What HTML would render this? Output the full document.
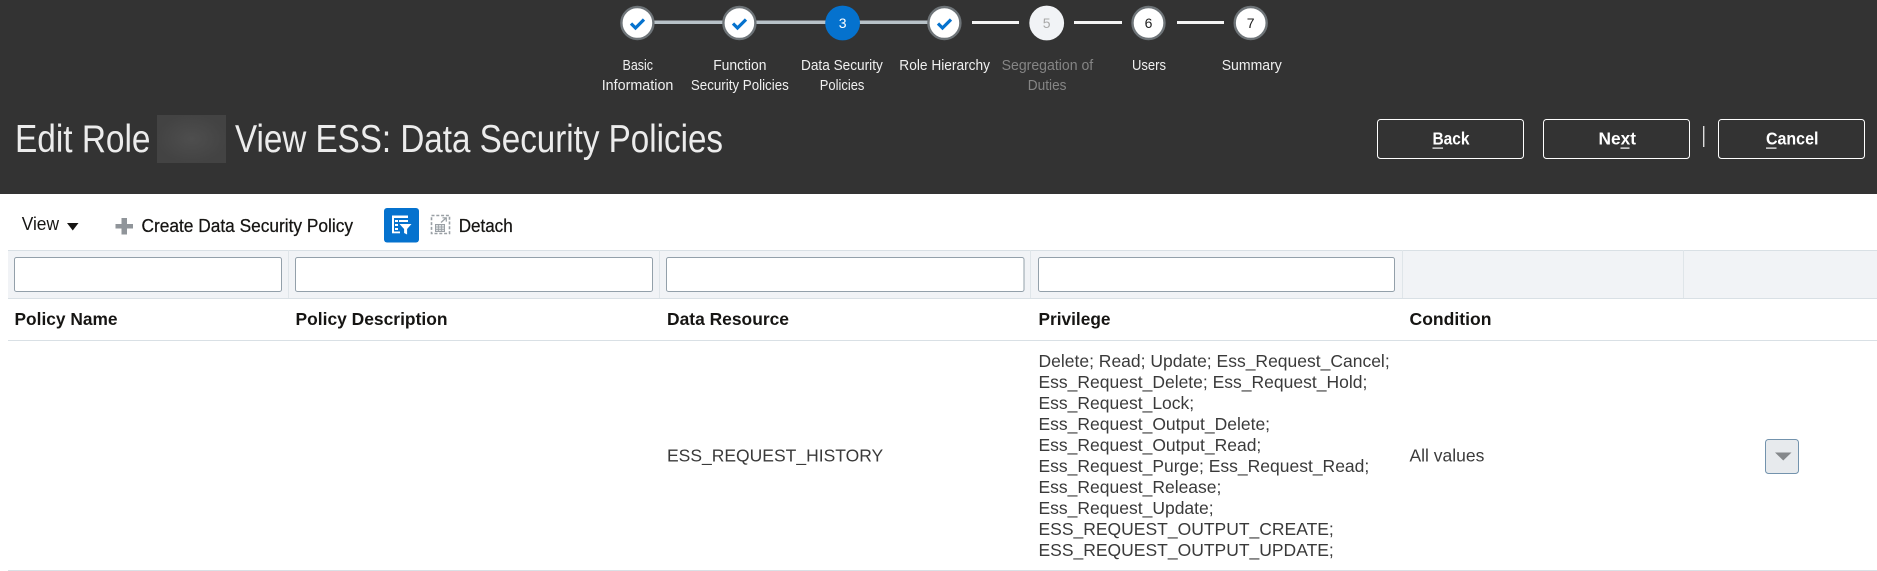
<!DOCTYPE html>
<html><head><meta charset="utf-8"><style>
html,body{margin:0;padding:0;background:#fff;width:1877px;height:571px;overflow:hidden}
svg{display:block}
text{font-family:"Liberation Sans",sans-serif}
.l{font-size:15px;fill:#f0f0f0}
.d{font-size:15px;fill:#858585}
.b{font-size:17.5px;font-weight:bold;fill:#fff}
.h{font-size:17.33px;font-weight:bold;fill:#161513}
.t{font-size:17.5px;fill:#3a3a3a}
.m{font-size:18px;fill:#161513;stroke:#161513;stroke-width:.25}
.n{font-size:14px;text-anchor:middle}
</style></head><body>
<svg width="1877" height="571" viewBox="0 0 1877 571" xmlns="http://www.w3.org/2000/svg">
<defs><radialGradient id="bl"><stop offset="0" stop-color="#4e4e4e"/><stop offset="1" stop-color="#434343"/></radialGradient></defs>
<rect x="0" y="0" width="1877" height="194" fill="#333"/>
<rect x="637" y="20.5" width="308" height="3.5" fill="#b8c2c8"/>
<rect x="972" y="21" width="47" height="3" fill="#f4f4f4"/>
<rect x="1074" y="21" width="48" height="3" fill="#f4f4f4"/>
<rect x="1177" y="21" width="47" height="3" fill="#f4f4f4"/>
<g fill="#fff" stroke="#6e7478" stroke-width="2.4">
<circle cx="637.4" cy="23" r="16"/><circle cx="739.4" cy="23" r="16"/><circle cx="944.4" cy="23" r="16"/><circle cx="1148.5" cy="23" r="16"/><circle cx="1250.7" cy="23" r="16"/>
</g>
<circle cx="842.6" cy="23" r="17.4" fill="#0572ce"/>
<circle cx="1046.7" cy="23" r="17.4" fill="#f1f3f6"/>
<g fill="none" stroke="#0572ce" stroke-width="3.2">
<path d="M631 23.5l4.500 4.500 8.500-8.500"/><path d="M733 23.5l4.500 4.500 8.500-8.500"/><path d="M938 23.5l4.500 4.500 8.500-8.500"/>
</g>
<text class="n" x="842.6" y="28" fill="#fff">3</text>
<text class="n" x="1046.7" y="28" fill="#a8a8a8">5</text>
<text class="n" x="1148.5" y="28" fill="#222">6</text>
<text class="n" x="1250.7" y="28" fill="#222">7</text>

<text class="l" x="622.5" y="70" textLength="30.5" lengthAdjust="spacingAndGlyphs">Basic</text>
<text class="l" x="601.7" y="90" textLength="71.7" lengthAdjust="spacingAndGlyphs">Information</text>
<text class="l" x="713.2" y="70" textLength="53.3" lengthAdjust="spacingAndGlyphs">Function</text>
<text class="l" x="690.9" y="90" textLength="97.9" lengthAdjust="spacingAndGlyphs">Security Policies</text>
<text class="l" x="801" y="70" textLength="81.8" lengthAdjust="spacingAndGlyphs">Data Security</text>
<text class="l" x="819.8" y="90" textLength="44.6" lengthAdjust="spacingAndGlyphs">Policies</text>
<text class="l" x="899.3" y="70" textLength="90.7" lengthAdjust="spacingAndGlyphs">Role Hierarchy</text>
<text class="d" x="1001.6" y="70" textLength="91.6" lengthAdjust="spacingAndGlyphs">Segregation of</text>
<text class="d" x="1027.8" y="90" textLength="38.7" lengthAdjust="spacingAndGlyphs">Duties</text>
<text class="l" x="1132" y="70" textLength="34" lengthAdjust="spacingAndGlyphs">Users</text>
<text class="l" x="1221.7" y="70" textLength="60.1" lengthAdjust="spacingAndGlyphs">Summary</text>

<text x="15" y="152" font-size="39" fill="#ececec" textLength="135.5" lengthAdjust="spacingAndGlyphs">Edit Role</text>
<rect x="157" y="115" width="69" height="48" fill="url(#bl)"/>
<text x="235" y="152" font-size="39" fill="#ececec" textLength="488" lengthAdjust="spacingAndGlyphs">View ESS: Data Security Policies</text>

<g fill="none" stroke="#fff" stroke-width="1">
<rect x="1377.5" y="119.5" width="146" height="39" rx="3"/>
<rect x="1543.5" y="119.5" width="146" height="39" rx="3"/>
<rect x="1718.5" y="119.5" width="146" height="39" rx="3"/>
</g>
<rect x="1703" y="126" width="1.4" height="21" fill="#ddd"/>
<text class="b" x="1432.5" y="144.500" textLength="37" lengthAdjust="spacingAndGlyphs">Back</text>
<text class="b" x="1598.5" y="144.500" textLength="37.5" lengthAdjust="spacingAndGlyphs">Next</text>
<rect x="1620.5" y="147.5" width="9" height="1.2" fill="#fff"/>
<text class="b" x="1766" y="144.500" textLength="52.4" lengthAdjust="spacingAndGlyphs">Cancel</text>
<rect x="1766" y="147.5" width="10.5" height="1.2" fill="#fff"/>
<rect x="1432.5" y="147.5" width="10.5" height="1.2" fill="#fff"/>

<text x="21.7" y="230" font-size="18" fill="#161513" textLength="37.3" lengthAdjust="spacingAndGlyphs">View</text>
<path d="M67 223h11.500l-5.750 7.500z" fill="#161513"/>
<path d="M121.500 218h5.500v6h6v4.500h-6v6h-5.500v-6h-6v-4.500h6z" fill="#90959a"/>
<text class="m" x="141.500" y="232" textLength="211.500" lengthAdjust="spacingAndGlyphs">Create Data Security Policy</text>
<rect x="384" y="208" width="35" height="34.500" rx="3" fill="#0572ce"/>
<g fill="#fff">
<rect x="392" y="215.500" width="16" height="2.500"/>
<rect x="392" y="215.500" width="2" height="16"/>
<rect x="395" y="220" width="3" height="2"/><rect x="399" y="220" width="9" height="2"/>
<rect x="395" y="224" width="3" height="2"/>
<rect x="395" y="228" width="3" height="2"/>
<rect x="392" y="231.500" width="8" height="1.800"/>
<path d="M399.500 224h12l-4.400 5v5.500l-3-1.500v-4z"/>
</g>
<g fill="none" stroke="#9aa0a5">
<rect x="431.500" y="215.500" width="18" height="18" stroke-width="1.600" stroke-dasharray="3 1.800"/>
<rect x="435.500" y="224.500" width="9" height="7" stroke-width="1" fill="#dfe2e4"/>
<path d="M435.500 227h9M435.500 229.300h9M438.500 224.500v7M441.500 224.500v7" stroke-width=".8"/>
<path d="M441 222.500l5-4.500M442.500 217.800h3.800v3.800" stroke-width="1.200"/>
</g>
<text class="m" x="458.700" y="232" textLength="54" lengthAdjust="spacingAndGlyphs">Detach</text>

<rect x="8" y="250" width="1869" height="48.500" fill="#f1f3f6"/>
<rect x="8" y="250" width="1869" height="1" fill="#d9e0e5"/>
<rect x="8" y="298" width="1869" height="1" fill="#d9e0e5"/>
<rect x="8" y="340" width="1869" height="1" fill="#d9e0e5"/>
<rect x="8" y="570" width="1869" height="1" fill="#d9e0e5"/>
<g fill="#dfe5e9">
<rect x="288" y="250" width="1" height="48"/><rect x="659" y="250" width="1" height="48"/><rect x="1030" y="250" width="1" height="48"/><rect x="1402" y="250" width="1" height="48"/><rect x="1683" y="250" width="1" height="48"/>
</g>
<g fill="#fff" stroke="#93a0aa">
<rect x="14.500" y="257.500" width="267" height="34" rx="2"/>
<rect x="295.500" y="257.500" width="357" height="34" rx="2"/>
<rect x="666.500" y="257.500" width="357.500" height="34" rx="2"/>
<rect x="1038.500" y="257.500" width="356" height="34" rx="2"/>
</g>
<text class="h" x="14.500" y="325" textLength="103" lengthAdjust="spacingAndGlyphs">Policy Name</text>
<text class="h" x="295.500" y="325" textLength="152" lengthAdjust="spacingAndGlyphs">Policy Description</text>
<text class="h" x="667" y="325" textLength="122" lengthAdjust="spacingAndGlyphs">Data Resource</text>
<text class="h" x="1038.500" y="325" textLength="72" lengthAdjust="spacingAndGlyphs">Privilege</text>
<text class="h" x="1409.500" y="325" textLength="82" lengthAdjust="spacingAndGlyphs">Condition</text>

<text class="t" x="667" y="461.500">ESS_REQUEST_HISTORY</text>
<text class="t" x="1038.500" y="367">Delete; Read; Update; Ess_Request_Cancel;</text>
<text class="t" x="1038.500" y="388">Ess_Request_Delete; Ess_Request_Hold;</text>
<text class="t" x="1038.500" y="409">Ess_Request_Lock;</text>
<text class="t" x="1038.500" y="430">Ess_Request_Output_Delete;</text>
<text class="t" x="1038.500" y="451">Ess_Request_Output_Read;</text>
<text class="t" x="1038.500" y="472">Ess_Request_Purge; Ess_Request_Read;</text>
<text class="t" x="1038.500" y="493">Ess_Request_Release;</text>
<text class="t" x="1038.500" y="514">Ess_Request_Update;</text>
<text class="t" x="1038.500" y="535">ESS_REQUEST_OUTPUT_CREATE;</text>
<text class="t" x="1038.500" y="556">ESS_REQUEST_OUTPUT_UPDATE;</text>
<text class="t" x="1409.500" y="461.500">All values</text>

<rect x="1765.500" y="439.500" width="33" height="34" rx="3" fill="#e7eaed" stroke="#7393ad"/>
<path d="M1775 452.500h16.500l-8.250 8z" fill="#85888b"/>
</svg>
</body></html>
